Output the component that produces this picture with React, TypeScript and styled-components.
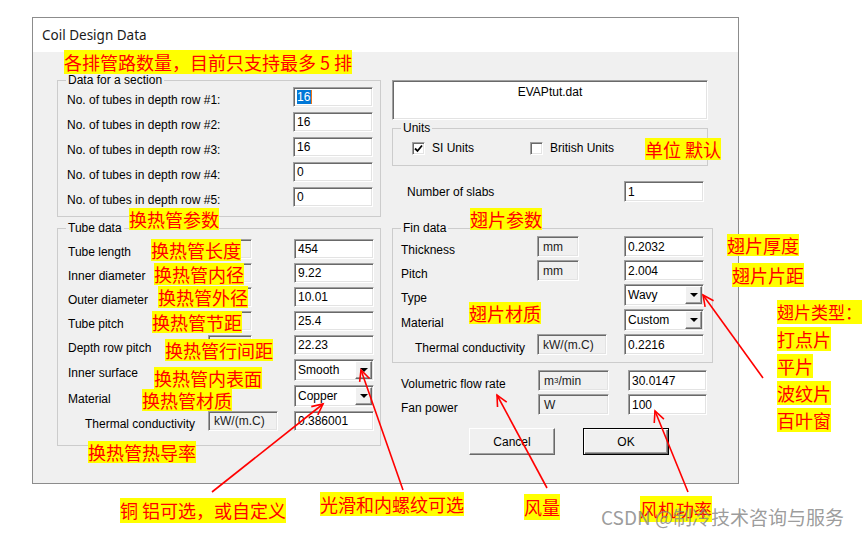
import styled, { createGlobalStyle } from "styled-components";

const GlobalStyle = createGlobalStyle`
  html, body { margin: 0; padding: 0; background: #ffffff; }
  * { box-sizing: border-box; }
`;

const Page = styled.div`
  position: relative;
  width: 863px;
  height: 536px;
  padding: 17px 0 0 32px;
  overflow: hidden;
  font-family: "Liberation Sans", Arial, sans-serif;
  font-size: 12px;
  color: #000;
`;

const Dialog = styled.div`
  width: 707px;
  height: 467px;
  border: 1px solid #8c8c8c;
  display: flex;
  flex-direction: column;
  background: #f0f0f0;
`;

const TitleBar = styled.div`
  height: 34px;
  background: #ffffff;
  display: flex;
  align-items: center;
  padding-left: 9px;
  font-family: "Noto Sans", "Open Sans", sans-serif;
  font-size: 13.5px;
  color: #1a1a1a;
`;

const Body = styled.div`
  flex: 1;
  display: flex;
  gap: 11px;
  padding: 21px 0 0 24px;
`;

const LeftColumn = styled.div`
  width: 324px;
  display: flex;
  flex-direction: column;
  gap: 4px;
`;

const RightColumn = styled.div`
  width: 321px;
  display: flex;
  flex-direction: column;
`;

const Group = styled.fieldset`
  margin: 0;
  padding: 0;
  min-width: 0;
  border: 1px solid #cccccc;
`;

const Legend = styled.legend`
  margin-left: 8px;
  padding: 0 2px;
  font-size: 12px;
  line-height: 14px;
`;

const SectionRows = styled.div`
  display: grid;
  grid-template-columns: 1fr 80px;
  grid-auto-rows: 20px;
  row-gap: 5px;
  align-items: center;
  padding: 0 7px 9px 9px;
`;

const TubeRows = styled.div`
  display: grid;
  grid-template-columns: 140px 86px 80px;
  row-gap: 4px;
  align-items: center;
  padding: 4px 0 14px 10px;
`;

const FinRows = styled.div`
  display: grid;
  grid-template-columns: 136px 87px 80px;
  row-gap: 3px;
  align-items: center;
  padding: 1px 8px 7px 8px;
`;

const FlowRows = styled.div`
  display: grid;
  grid-template-columns: 137px 90px 79px;
  row-gap: 3px;
  align-items: center;
  padding-left: 9px;
  margin-top: 7px;
`;

const Label = styled.span<{ $indent?: number }>`
  padding-left: ${(p) => p.$indent ?? 0}px;
  padding-top: 6px;
  white-space: nowrap;
  line-height: 14px;
`;

const Field = styled.div<{ $h?: number }>`
  height: ${(p) => p.$h ?? 20}px;
  background: #ffffff;
  border-style: solid;
  border-width: 1px;
  border-color: #a0a0a0 #ffffff #ffffff #a0a0a0;
  box-shadow: inset 1px 1px 0 #696969, inset -1px -1px 0 #e3e3e3;
  padding: 0 3px;
  display: flex;
  align-items: center;
  white-space: nowrap;
  overflow: hidden;
`;

const UnitBox = styled(Field)<{ $w: number }>`
  width: ${(p) => p.$w}px;
  background: #f0f0f0;
  color: #222;
  padding-left: 5px;
`;

const Selected = styled.span`
  background: #0078d7;
  color: #fff;
  padding-right: 1px;
  border-right: 1px solid #e8741a;
`;

const Combo = styled(Field)`
  height: 22px;
  justify-content: space-between;
  padding-right: 1px;
`;

const ComboButton = styled.span`
  width: 17px;
  height: 18px;
  background: #f0f0f0;
  border: 1px solid;
  border-color: #ffffff #696969 #696969 #ffffff;
  box-shadow: inset -1px -1px 0 #a0a0a0;
  display: flex;
  align-items: center;
  justify-content: center;

  &::after {
    content: "";
    border-left: 4px solid transparent;
    border-right: 4px solid transparent;
    border-top: 4px solid #000;
  }
`;

const FileBox = styled(Field)`
  height: 40px;
  width: 316px;
  margin-top: 7px;
  align-items: flex-start;
  justify-content: center;
  padding-top: 4px;
`;

const UnitsGroup = styled(Group)`
  width: 316px;
  margin-top: 1px;
`;

const CheckRow = styled.div`
  display: flex;
  gap: 56px;
  padding: 6px 0 10px 19px;
`;

const CheckItem = styled.label`
  display: flex;
  align-items: center;
  gap: 7px;
  line-height: 14px;
`;

const CheckBox = styled.span`
  width: 13px;
  height: 13px;
  background: #fff;
  border: 1px solid;
  border-color: #a0a0a0 #ffffff #ffffff #a0a0a0;
  box-shadow: inset 1px 1px 0 #696969, inset -1px -1px 0 #e3e3e3;
  display: flex;
  align-items: center;
  justify-content: center;
`;

const SlabsRow = styled.div`
  display: flex;
  align-items: center;
  margin-top: 15px;
  padding: 0 9px 0 15px;
  justify-content: space-between;
`;

const SlabsField = styled(Field)`
  width: 80px;
`;

const FinGroup = styled(Group)`
  margin-top: 19px;
`;

const Sup = styled.sup`
  font-size: 8px;
`;

const ButtonRow = styled.div`
  display: flex;
  gap: 28px;
  padding-left: 77px;
  margin-top: 13px;
`;

const DlgButton = styled.button<{ $default?: boolean }>`
  width: 86px;
  height: 27px;
  font-family: "Liberation Sans", Arial, sans-serif;
  font-size: 12px;
  color: #000;
  background: #f0f0f0;
  border: 1px solid;
  border-color: ${(p) =>
    p.$default ? "#000" : "#ffffff #696969 #696969 #ffffff"};
  box-shadow: ${(p) =>
    p.$default
      ? "inset 1px 1px 0 #ffffff, inset -1px -1px 0 #696969, inset -2px -2px 0 #a0a0a0"
      : "inset -1px -1px 0 #a0a0a0"};
  padding: 0;
`;

const Note = styled.span<{ $x: number; $y: number; $lh?: number; $fs?: number }>`
  position: absolute;
  left: ${(p) => p.$x}px;
  top: ${(p) => p.$y}px;
  background: #ffff00;
  color: #ff0000;
  font-family: "Noto Sans CJK SC", sans-serif;
  font-size: ${(p) => p.$fs ?? 18}px;
  line-height: ${(p) => p.$lh ?? 22}px;
  white-space: nowrap;
`;

const Overlay = styled.svg`
  position: absolute;
  left: 0;
  top: 0;
  pointer-events: none;
`;

const Watermark = styled.span`
  position: absolute;
  left: 601px;
  top: 503px;
  font-family: "Noto Sans CJK SC", sans-serif;
  font-size: 19px;
  color: rgba(130, 130, 130, 0.8);
  white-space: nowrap;
`;

type NoteData = { x: number; y: number; lh?: number; fs?: number; text: string };

const notes: NoteData[] = [
  { x: 64, y: 50, lh: 24, text: "各排管路数量，目前只支持最多 5 排" },
  { x: 129, y: 208, text: "换热管参数" },
  { x: 151, y: 239, text: "换热管长度" },
  { x: 154, y: 263, text: "换热管内径" },
  { x: 158, y: 286, text: "换热管外径" },
  { x: 152, y: 311, text: "换热管节距" },
  { x: 165, y: 339, text: "换热管行间距" },
  { x: 154, y: 367, text: "换热管内表面" },
  { x: 142, y: 389, text: "换热管材质" },
  { x: 88, y: 441, text: "换热管热导率" },
  { x: 470, y: 208, text: "翅片参数" },
  { x: 469, y: 302, text: "翅片材质" },
  { x: 645, y: 138, text: "单位 默认" },
  { x: 727, y: 234, text: "翅片厚度" },
  { x: 732, y: 263, lh: 24, text: "翅片片距" },
  { x: 777, y: 300, lh: 24, fs: 17, text: "翅片类型：" },
  { x: 777, y: 327, lh: 24, text: "打点片" },
  { x: 777, y: 354, lh: 24, text: "平片" },
  { x: 777, y: 381, lh: 24, text: "波纹片" },
  { x: 777, y: 408, lh: 24, text: "百叶窗" },
  { x: 120, y: 498, lh: 25, text: "铜 铝可选，或自定义" },
  { x: 320, y: 492, lh: 24, text: "光滑和内螺纹可选" },
  { x: 524, y: 494, lh: 26, text: "风量" },
  { x: 640, y: 496, lh: 26, text: "风机功率" },
];

const arrows = [
  { from: [212, 492], to: [323, 404] },
  { from: [403, 490], to: [361, 370] },
  { from: [547, 488], to: [497, 395] },
  { from: [688, 492], to: [655, 411] },
  { from: [763, 378], to: [703, 295] },
];

const Arrow = ({ from, to }: { from: number[]; to: number[] }) => {
  const ang = Math.atan2(to[1] - from[1], to[0] - from[0]);
  const head = (d: number) =>
    `${to[0] - 12 * Math.cos(ang + d)},${to[1] - 12 * Math.sin(ang + d)}`;
  return (
    <g stroke="#ff0000" strokeWidth="1.6" fill="none">
      <line x1={from[0]} y1={from[1]} x2={to[0]} y2={to[1]} />
      <polyline points={`${head(0.45)} ${to[0]},${to[1]} ${head(-0.45)}`} />
    </g>
  );
};

const sectionRows = ["16", "16", "16", "0", "0"];

const App = () => {
  return (
    <Page>
      <GlobalStyle />
      <Dialog>
        <TitleBar>Coil Design Data</TitleBar>
        <Body>
          <LeftColumn>
            <Group>
              <Legend>Data for a section</Legend>
              <SectionRows>
                {sectionRows.flatMap((v, i) => [
                  <Label key={`l${i}`}>No. of tubes in depth row #{i + 1}:</Label>,
                  <Field key={`f${i}`}>
                    {i === 0 ? <Selected>{v}</Selected> : v}
                  </Field>,
                ])}
              </SectionRows>
            </Group>
            <Group>
              <Legend>Tube data</Legend>
              <TubeRows>
                <Label>Tube length</Label>
                <UnitBox $w={44} />
                <Field>454</Field>
                <Label>Inner diameter</Label>
                <UnitBox $w={44} />
                <Field>9.22</Field>
                <Label>Outer diameter</Label>
                <UnitBox $w={44} />
                <Field>10.01</Field>
                <Label>Tube pitch</Label>
                <UnitBox $w={44} />
                <Field>25.4</Field>
                <Label>Depth row pitch</Label>
                <UnitBox $w={44} />
                <Field>22.23</Field>
                <Label>Inner surface</Label>
                <span />
                <Combo>
                  Smooth
                  <ComboButton />
                </Combo>
                <Label>Material</Label>
                <span />
                <Combo>
                  Copper
                  <ComboButton />
                </Combo>
                <Label $indent={17}>Thermal conductivity</Label>
                <UnitBox $w={70}>kW/(m.C)</UnitBox>
                <Field>0.386001</Field>
              </TubeRows>
            </Group>
          </LeftColumn>
          <RightColumn>
            <FileBox>EVAPtut.dat</FileBox>
            <UnitsGroup>
              <Legend>Units</Legend>
              <CheckRow>
                <CheckItem>
                  <CheckBox>
                    <svg width="9" height="9" viewBox="0 0 9 9">
                      <path d="M1 4.5 L3.5 7 L8 1.5" stroke="#000" strokeWidth="1.8" fill="none" />
                    </svg>
                  </CheckBox>
                  SI Units
                </CheckItem>
                <CheckItem>
                  <CheckBox />
                  British Units
                </CheckItem>
              </CheckRow>
            </UnitsGroup>
            <SlabsRow>
              <span>Number of slabs</span>
              <SlabsField $h={21}>1</SlabsField>
            </SlabsRow>
            <FinGroup>
              <Legend>Fin data</Legend>
              <FinRows>
                <Label>Thickness</Label>
                <UnitBox $w={42} $h={21}>mm</UnitBox>
                <Field $h={21}>0.2032</Field>
                <Label>Pitch</Label>
                <UnitBox $w={42} $h={21}>mm</UnitBox>
                <Field $h={21}>2.004</Field>
                <Label>Type</Label>
                <span />
                <Combo>
                  Wavy
                  <ComboButton />
                </Combo>
                <Label>Material</Label>
                <span />
                <Combo>
                  Custom
                  <ComboButton />
                </Combo>
                <Label $indent={14}>Thermal conductivity</Label>
                <UnitBox $w={70} $h={21}>kW/(m.C)</UnitBox>
                <Field $h={21}>0.2216</Field>
              </FinRows>
            </FinGroup>
            <FlowRows>
              <Label>Volumetric flow rate</Label>
              <UnitBox $w={71} $h={21}>
                m<Sup>3</Sup>/min
              </UnitBox>
              <Field $h={21}>30.0147</Field>
              <Label>Fan power</Label>
              <UnitBox $w={71} $h={21}>W</UnitBox>
              <Field $h={21}>100</Field>
            </FlowRows>
            <ButtonRow>
              <DlgButton>Cancel</DlgButton>
              <DlgButton $default>OK</DlgButton>
            </ButtonRow>
          </RightColumn>
        </Body>
      </Dialog>

      <Overlay width="863" height="536">
        {arrows.map((a, i) => (
          <Arrow key={i} from={a.from} to={a.to} />
        ))}
      </Overlay>
      {notes.map((n, i) => (
        <Note key={i} $x={n.x} $y={n.y} $lh={n.lh} $fs={n.fs}>
          {n.text}
        </Note>
      ))}
      <Watermark>CSDN @制冷技术咨询与服务</Watermark>
    </Page>
  );
};

export default App;
